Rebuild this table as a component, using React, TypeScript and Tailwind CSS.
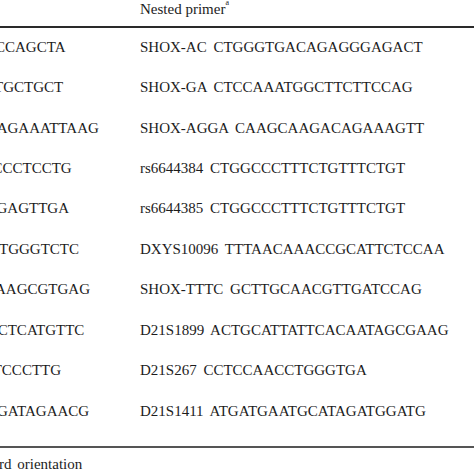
const rows = [
  { left: "CCAGCTA", shift: "-ml-[5px]", nested: "SHOX-AC CTGGGTGACAGAGGGAGACT" },
  { left: "TGCTGCT", shift: "-ml-[6px]", nested: "SHOX-GA CTCCAAATGGCTTCTTCCAG" },
  { left: "AGAAATTAAG", shift: "-ml-[3.3px]", nested: "SHOX-AGGA CAAGCAAGACAGAAAGTT" },
  { left: "CCCTCCTG", shift: "-ml-[7.5px]", nested: "rs6644384 CTGGCCCTTTCTGTTTCTGT" },
  { left: "GAGTTGA", shift: "-ml-[3.5px]", nested: "rs6644385 CTGGCCCTTTCTGTTTCTGT" },
  { left: "TGGGTCTC", shift: "-ml-[1px]", nested: "DXYS10096 TTTAACAAACCGCATTCTCCAA" },
  { left: "AAGCGTGAG", shift: "-ml-[5px]", nested: "SHOX-TTTC GCTTGCAACGTTGATCCAG" },
  { left: "CTCATGTTC", shift: "-ml-[2.3px]", nested: "D21S1899 ACTGCATTATTCACAATAGCGAAG" },
  { left: "TCCCTTG", shift: "-ml-[7.3px]", nested: "D21S267 CCTCCAACCTGGGTGA" },
  { left: "GATAGAACG", shift: "-ml-[3px]", nested: "D21S1411 ATGATGAATGCATAGATGGATG" },
];

export default function App() {
  return (
    <div className="w-[474px] h-[474px] overflow-hidden bg-white text-[#1c1c1c] font-['Liberation_Serif',serif] text-[15px] leading-[15px]">
      <div className="h-[26px] pt-[1.5px] pl-[140px] whitespace-nowrap">
        Nested primer<sup className="text-[8px] align-top relative top-[1px]">a</sup>
      </div>
      <div className="border-t-2 border-[#2a2a2a]">
        {rows.map((row, i) => (
          <div key={i} className="h-[40.44px] pb-[2px] flex items-center whitespace-nowrap">
            <div className="w-[140px] shrink-0">
              <span className={`inline-block ${row.shift}`}>{row.left}</span>
            </div>
            <div className="[word-spacing:3px]">{row.nested}</div>
          </div>
        ))}
      </div>
      <div className="mt-[13.6px] border-t-2 border-[#555]" />
      <div className="mt-[9.4px] whitespace-nowrap">
        <span className="inline-block -ml-[1px] [word-spacing:2px]">rd orientation</span>
      </div>
    </div>
  );
}
